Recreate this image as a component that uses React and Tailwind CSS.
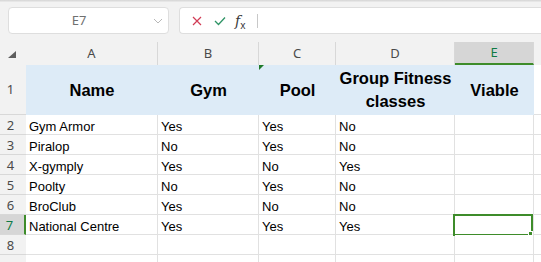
import React from "react";

const cols = ["A", "B", "C", "D", "E"];
const rows = [
  ["Gym Armor", "Yes", "Yes", "No"],
  ["Piralop", "No", "Yes", "No"],
  ["X-gymply", "Yes", "No", "Yes"],
  ["Poolty", "No", "Yes", "No"],
  ["BroClub", "Yes", "No", "No"],
  ["National Centre", "Yes", "Yes", "Yes"],
  ["", "", "", ""],
  ["", "", "", ""],
];

const hdr = "font-['Noto_Sans',sans-serif] text-[13px] text-[#4a4a4a]";
const cellFont = "font-['Liberation_Sans',Arial,sans-serif] text-[13px] text-black";

export default function App() {
  return (
    <div className="w-[541px] h-[262px] overflow-hidden bg-[#f2f2f2]">
      {/* formula bar strip */}
      <div className="h-[42px] relative">
        <div className="h-[2px] bg-gradient-to-b from-[#d4d4d4] to-[#ececec]" />
        <div className="flex gap-[10px] pl-[8px] pt-[5px]">
          <div className="w-[161px] h-[27px] rounded-[4px] border border-[#dedede] bg-white flex items-center">
            <span className="flex-1 text-center font-['Noto_Sans',sans-serif] text-[13px] text-[#707070]">E7</span>
            <svg width="18" height="10" viewBox="0 0 18 10" className="mr-[1px]">
              <path d="M5 3 L9 7 L13 3" fill="none" stroke="#b8b8b8" strokeWidth="1" />
            </svg>
          </div>
          <div className="flex-1 h-[27px] rounded-l-[4px] border border-r-0 border-[#dedede] bg-white flex items-center">
            <svg width="10" height="10" viewBox="0 0 10 10" className="ml-[12px]">
              <path d="M1 1 L9 9 M9 1 L1 9" stroke="#d13c55" strokeWidth="1.2" />
            </svg>
            <svg width="12" height="10" viewBox="0 0 12 10" className="ml-[12px]">
              <path d="M1 5 L4.5 8.5 L11 1.5" fill="none" stroke="#2f9466" strokeWidth="1.3" />
            </svg>
            <span className="ml-[9px] font-['DejaVu_Serif',serif] italic text-[14px] leading-none text-[#3a3a3a]">
              f<span className="text-[10px] not-italic font-['Noto_Sans',sans-serif] relative top-[3px]">x</span>
            </span>
            <span className="ml-[12px] w-px h-[14px] bg-[#c8c8c8]" />
          </div>
        </div>
      </div>

      {/* grid */}
      <div className="grid grid-cols-[26px_132px_101px_77px_119px_79px_1fr] grid-rows-[23px_50px_repeat(8,20px)]">
        {/* column headers */}
        <div className="relative">
          <svg width="8" height="7" viewBox="0 0 8 7" className="absolute left-[8px] top-[9px]">
            <path d="M8 0 L8 7 L0 7 Z" fill="#5e5e5e" />
          </svg>
        </div>
        {cols.map((c) => (
          <div
            key={c}
            className={`flex items-center justify-center border-r border-[#d8d8d8] ${hdr} ${
              c === "E" ? "bg-[#d6d6d6] border-b-2 border-b-[#3e8c2a] !text-[#0f7b45]" : ""
            }`}
          >
            {c}
          </div>
        ))}
        <div />

        {/* row 1 */}
        <div className={`flex items-center justify-center pr-[5px] border-b border-[#d8d8d8] ${hdr}`}>1</div>
        <div className="col-span-5 bg-[#ddebf7] grid grid-cols-[132px_101px_77px_119px_79px] font-['Liberation_Sans',Arial,sans-serif] font-bold text-[16.5px] text-black leading-[23px] relative">
          <div className="flex items-center justify-center">Name</div>
          <div className="flex items-center justify-center">Gym</div>
          <div className="flex items-center justify-center relative">
            <span className="absolute left-0 top-0 w-0 h-0 border-t-[5px] border-t-[#1f7a2a] border-r-[5px] border-r-transparent" />
            Pool
          </div>
          <div className="flex items-center justify-center text-center">Group Fitness<br />classes</div>
          <div className="flex items-center justify-center">Viable</div>
        </div>
        <div className="bg-white border-b border-[#e1e1e1]" />

        {/* data rows */}
        {rows.map((r, i) => {
          const n = i + 2;
          const sel = n === 7;
          return (
            <React.Fragment key={n}>
              <div
                className={`flex justify-center pr-[5px] pt-[2px] leading-[17px] border-b border-[#d8d8d8] ${hdr} ${
                  sel ? "bg-[#d6d6d6] border-r-2 border-r-[#3e8c2a] !text-[#0f7b45]" : ""
                }`}
              >
                {n < 9 ? n : ""}
              </div>
              {r.map((v, j) => (
                <div
                  key={j}
                  className={`bg-white border-r border-b border-[#e1e1e1] pl-[3px] pt-[3px] leading-[17px] whitespace-nowrap ${cellFont}`}
                >
                  {v}
                </div>
              ))}
              <div className="bg-white border-r border-b border-[#e1e1e1] relative">
                {sel && (
                  <div className="absolute -left-[2px] -top-[1px] right-0 -bottom-[2px] border-2 border-[#3e8c2a]">
                    <span className="absolute -right-[2px] -bottom-[2px] w-[5px] h-[5px] bg-[#3e8c2a] border border-white" />
                  </div>
                )}
              </div>
              <div className="bg-white border-b border-[#e1e1e1]" />
            </React.Fragment>
          );
        })}
      </div>
    </div>
  );
}
